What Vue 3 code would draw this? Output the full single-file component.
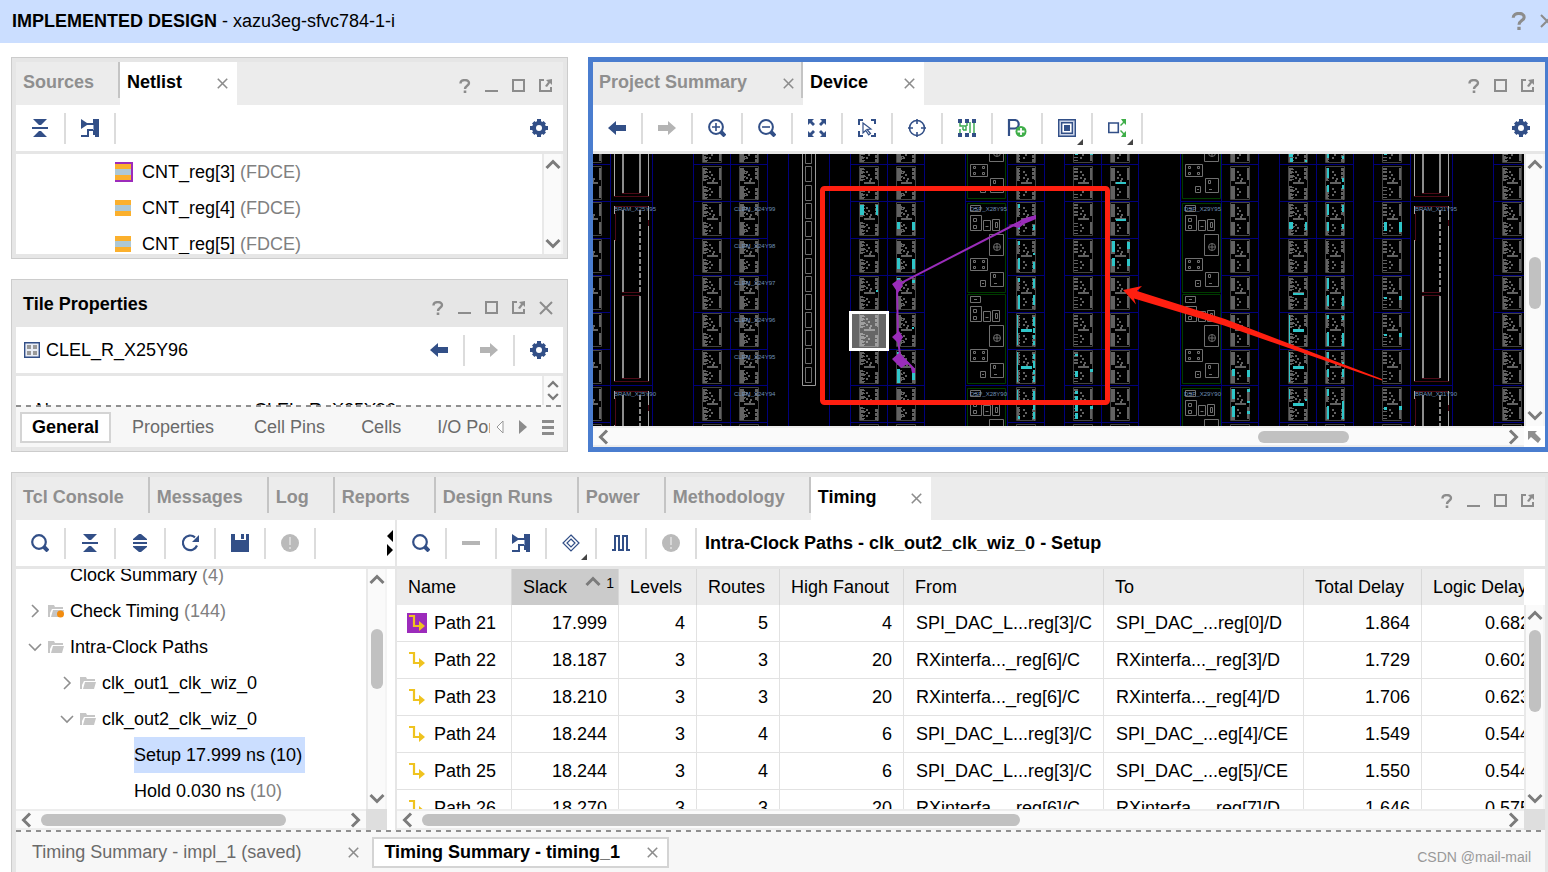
<script setup>
import { ref } from 'vue'

const netCells = [
  { name: 'CNT_reg[3]', kind: '(FDCE)', marked: true },
  { name: 'CNT_reg[4]', kind: '(FDCE)', marked: false },
  { name: 'CNT_reg[5]', kind: '(FDCE)', marked: false }
]

const deviceTools = [
  { icon: 'back', label: 'Previous view' },
  { icon: 'forward', label: 'Next view', off: true },
  { icon: 'zoom-in', label: 'Zoom in' },
  { icon: 'zoom-out', label: 'Zoom out' },
  { icon: 'fit', label: 'Zoom fit' },
  { icon: 'select-area', label: 'Select area' },
  { icon: 'target', label: 'Autofit selection' },
  { icon: 'routing', label: 'Routing resources' },
  { icon: 'pblock', label: 'Draw Pblock' },
  { icon: 'nested', label: 'Expand cells', more: true },
  { icon: 'connect', label: 'Show connections', more: true }
]
const treeTools = [
  { icon: 'search', label: 'Search' },
  { icon: 'collapse', label: 'Collapse all' },
  { icon: 'expand', label: 'Expand all' },
  { icon: 'refresh', label: 'Rerun' },
  { icon: 'save', label: 'Save' },
  { icon: 'warn', label: 'Messages', off: true }
]
const pathTools = [
  { icon: 'search', label: 'Search paths' },
  { icon: 'minus', label: 'Remove', off: true },
  { icon: 'netlist', label: 'Schematic' },
  { icon: 'diamond', label: 'Mark paths', more: true },
  { icon: 'pulse', label: 'Waveform' },
  { icon: 'warn', label: 'Path messages', off: true }
]

const propTabs = ['Properties', 'Cell Pins', 'Cells', 'I/O Ports']
const logTabs = ['Tcl Console', 'Messages', 'Log', 'Reports', 'Design Runs', 'Power', 'Methodology']

const tree = [
  { text: 'Clock Summary', count: '(4)', level: 0, leaf: true },
  { text: 'Check Timing', count: '(144)', level: 0, arrow: 'tree-right', folder: 'folder-dot' },
  { text: 'Intra-Clock Paths', level: 0, arrow: 'tree-down', folder: 'folder' },
  { text: 'clk_out1_clk_wiz_0', level: 1, arrow: 'tree-right', folder: 'folder' },
  { text: 'clk_out2_clk_wiz_0', level: 1, arrow: 'tree-down', folder: 'folder' },
  { text: 'Setup 17.999 ns', count: '(10)', level: 2, leaf: true, picked: true },
  { text: 'Hold 0.030 ns', count: '(10)', level: 2, leaf: true }
]

const columns = ['Name', 'Slack', 'Levels', 'Routes', 'High Fanout', 'From', 'To', 'Total Delay', 'Logic Delay']
const rows = ref([
  ['Path 21', '17.999', '4', '5', '4', 'SPI_DAC_L...reg[3]/C', 'SPI_DAC_...reg[0]/D', '1.864', '0.682'],
  ['Path 22', '18.187', '3', '3', '20', 'RXinterfa..._reg[6]/C', 'RXinterfa..._reg[3]/D', '1.729', '0.602'],
  ['Path 23', '18.210', '3', '3', '20', 'RXinterfa..._reg[6]/C', 'RXinterfa..._reg[4]/D', '1.706', '0.623'],
  ['Path 24', '18.244', '3', '4', '6', 'SPI_DAC_L...reg[3]/C', 'SPI_DAC_...eg[4]/CE', '1.549', '0.544'],
  ['Path 25', '18.244', '3', '4', '6', 'SPI_DAC_L...reg[3]/C', 'SPI_DAC_...eg[5]/CE', '1.550', '0.544'],
  ['Path 26', '18.270', '3', '3', '20', 'RXinterfa..._reg[6]/C', 'RXinterfa..._reg[7]/D', '1.646', '0.575']
])
const isNumber = i => i > 0 && i !== 5 && i !== 6

/* ---- device floorplan ---- */
const profiles = {
  jag: [4, 5, 2, 4, 5, 3, 1, 5, 6, 4, 1, 5, 3],
  half: [4, 4, 5, 6, 5, 7, 4, 4, 6, 5, 4, 4, 5],
  solid: [4, 4, 4, 4, 4, 4, 4, 4, 4, 4, 4, 4, 4],
  thin: [3, 2, 3, 3, 2, 3, 3, 2, 3, 3, 3, 2, 3],
  blocks: [4, 4, 0, 4, 4, 0, 0, 4, 4, 0, 4, 4, 0]
}
const specks = 'M7 5h2v2h-2zM9 8h2v2h-2zM7 11h2v2h-2zM11 12h2v2h-2zM7 22h2v2h-2zM9 25h2v2h-2zM7 28h2v2h-2z'
function cellPath(kind, dotted) {
  const p = profiles[kind]
  let d = ''
  for (let i = 0; i < p.length; i++) {
    if (!p[i]) continue
    d += `M1 ${2 + i}h${p[i]}v1h-${p[i]}z`
    d += `M1 ${20 + i}h${p[p.length - 1 - i]}v1h-${p[p.length - 1 - i]}z`
  }
  d += specks + 'M5 16h11v2h-11zM10 14h2v2h-2z'
  if (dotted) {
    for (let y = 2; y < 32; y += 4) if (y < 13 || y > 18) d += `M16 ${y}h3v3h-3zM18 ${y + 3}h1v1h-1z`
  } else d += 'M17 2h2v12h-2zM17 20h2v12h-2z'
  return d
}
const sliceColumns = [
  [582, 'half', false], [702, 'jag', false], [739, 'half', true], [859, 'jag', true], [896, 'half', true],
  [1016, 'thin', true], [1073, 'blocks', false], [1110, 'solid', false], [1230, 'solid', false],
  [1288, 'jag', true], [1325, 'thin', true], [1382, 'blocks', false], [1502, 'jag', false]
].map(([x, k, dot]) => ({ x, d: cellPath(k, dot) }))
const sliceRows = [129, 166, 202, 239, 276, 313, 350, 387, 424]
const rowLines = [164, 201, 238, 275, 312, 349, 385, 422]
const blueX = [610, 652, 693, 730, 767, 788, 829, 850, 887, 924, 965, 1007, 1044, 1064, 1101, 1138, 1180, 1221, 1258, 1279, 1316, 1353, 1373, 1410, 1452, 1493]
const blueSpans = [[593, 610], [693, 767], [850, 924], [1007, 1044], [1064, 1138], [1221, 1258], [1279, 1353], [1373, 1410], [1493, 1524]]
const blueLines = blueX.map(x => `M${x}.5 154v272`).join('') +
  rowLines.map(y => blueSpans.map(([a, b]) => `M${a} ${y}.5H${b}`).join('')).join('') +
  [201, 385].map(y => `M610 ${y}.5h42M965 ${y}.5h42M1180 ${y}.5h41M1410 ${y}.5h42`).join('')

const bramX = [614, 1414]
const bramY = [21, 206, 391]
const dspX = [967, 1182]
const dspY = [109, 203, 294, 388]
const shaftRects = [148, 166, 185, 203, 221, 239, 258, 276, 294, 312, 330, 348, 367]

const used = [
  [860, 205, 4, 10], [876, 205, 2, 10], [897, 222, 3, 7], [897, 258, 3, 11], [876, 290, 2, 2], [897, 278, 3, 2], [897, 352, 3, 2], [897, 369, 3, 14],
  [912, 222, 3, 8], [912, 259, 3, 10], [912, 280, 3, 3], [912, 327, 2, 2], [912, 373, 3, 7],
  [1018, 204, 2, 4], [1033, 225, 2, 5], [1018, 227, 2, 2], [1018, 241, 2, 4], [1018, 258, 2, 11], [1033, 253, 2, 2], [1033, 262, 2, 7],
  [1018, 278, 2, 4], [1018, 295, 2, 14], [1033, 279, 2, 9], [1033, 295, 2, 10],
  [1033, 317, 2, 9], [1033, 328, 2, 5], [1033, 335, 2, 4], [1033, 341, 2, 4], [1021, 329, 11, 3], [1021, 366, 11, 3],
  [1033, 354, 2, 5], [1033, 361, 2, 7], [1033, 370, 2, 4], [1033, 376, 2, 6], [1017, 315, 1, 30], [1017, 352, 1, 30],
  [1033, 391, 2, 11], [1033, 405, 2, 5], [1033, 412, 2, 7], [1017, 390, 1, 12], [1018, 416, 2, 3], [1021, 404, 11, 1],
  [1075, 154, 3, 1], [1090, 154, 3, 1], [1075, 354, 3, 2], [1075, 371, 3, 6], [1090, 369, 3, 3], [1075, 391, 3, 3], [1075, 396, 3, 4], [1075, 405, 3, 6], [1075, 413, 3, 6], [1090, 406, 3, 3],
  [1116, 182, 10, 2], [1116, 219, 10, 2], [1112, 241, 3, 11], [1127, 242, 3, 7], [1112, 258, 3, 8], [1127, 259, 3, 7],
  [1289, 154, 4, 3], [1290, 158, 3, 4], [1305, 160, 2, 2], [1289, 222, 4, 7], [1305, 222, 2, 8], [1293, 293, 11, 2], [1293, 329, 11, 3], [1293, 366, 11, 3], [1293, 403, 11, 3],
  [1289, 315, 1, 30], [1289, 352, 1, 30], [1289, 389, 1, 10], [1305, 399, 2, 2],
  [1327, 154, 2, 4], [1342, 156, 2, 3], [1327, 168, 2, 10], [1327, 185, 2, 7], [1342, 178, 2, 4], [1342, 185, 2, 4], [1327, 204, 2, 11], [1342, 205, 2, 7],
  [1327, 222, 2, 9], [1342, 224, 2, 5], [1327, 278, 2, 11], [1327, 295, 2, 11], [1342, 296, 2, 10], [1327, 315, 2, 4], [1342, 316, 2, 4], [1327, 332, 2, 14],
  [1342, 333, 2, 13], [1327, 352, 2, 9], [1327, 369, 2, 8], [1342, 362, 2, 2], [1342, 369, 2, 8], [1327, 389, 2, 7], [1327, 406, 2, 13], [1342, 401, 2, 18],
  [1384, 154, 3, 1], [1384, 222, 3, 9], [1399, 222, 3, 10], [1384, 297, 3, 2], [1399, 296, 3, 4], [1384, 334, 3, 2], [1399, 333, 3, 4], [1384, 407, 3, 3], [1399, 406, 3, 4],
  [1232, 369, 3, 7], [1247, 370, 3, 7], [1232, 389, 3, 10], [1247, 389, 3, 3], [1232, 406, 3, 11], [1247, 401, 3, 2], [1247, 411, 3, 3]
].map(([x, y, w, h]) => `M${x} ${y}h${w}v${h}h-${w}z`).join('')

const siteLabels = [
  ...[99, 98, 97, 96, 95, 94].map((n, i) => ({ x: 734, y: 211 + i * 37, t: 'CLEM_X24Y' + n })),
  { x: 614, y: 211, t: 'BRAM_X25Y95' }, { x: 614, y: 396, t: 'BRAM_X25Y90' },
  { x: 970, y: 211, t: 'DSP_X28Y95' }, { x: 970, y: 396, t: 'DSP_X28Y90' },
  { x: 1184, y: 211, t: 'DSP_X29Y95' }, { x: 1184, y: 396, t: 'DSP_X29Y90' },
  { x: 1415, y: 211, t: 'BRAM_X31Y95' }, { x: 1415, y: 396, t: 'BRAM_X31Y90' }
]
</script>

<template>
  <svg class="sprite" width="0" height="0" aria-hidden="true">
    <symbol id="collapse" viewBox="0 0 18 18"><path fill="#324f87" d="M2 0h14l-6 6H8zM1 8h16v2H1zM8 12h2l6 6H2z" /></symbol>
    <symbol id="expand" viewBox="0 0 18 18"><path fill="#324f87" d="M8 0h2l6 5v1H2V5zM2 8h14v2H2zM2 12h14v1l-6 5H8l-6-5z" /></symbol>
    <symbol id="netlist" viewBox="0 0 18 18"><path fill="#324f87" d="M0 0l6 4h6V0h6v18h-4v-2h-2v-4H8v6H0v-2h6v-6h6V6H6L0 10z" /><path stroke="#8ba0c6" d="M12.500 6v5" /></symbol>
    <symbol id="gear" viewBox="0 0 18 18">
      <g fill="#324f87"><path d="M7 0h4v18H7zM0 7h18v4H0z" /><path d="M7 0h4v18H7zM0 7h18v4H0z" transform="rotate(45 9 9) translate(.9 .9) scale(.9)" /><circle cx="9" cy="9" r="7" /></g><circle cx="9" cy="9" r="3" fill="#fff" />
    </symbol>
    <symbol id="search" viewBox="0 0 18 18"><circle cx="8" cy="8" r="6.800" fill="none" stroke="#324f87" stroke-width="2.200" /><path stroke="#324f87" stroke-width="4" d="M13 13l4 4" /></symbol>
    <symbol id="zoom-in" viewBox="0 0 18 18"><circle cx="8" cy="8" r="6.900" fill="none" stroke="#324f87" stroke-width="2" /><path stroke="#324f87" stroke-width="4" d="M13 13l4 4" /><path stroke="#324f87" stroke-width="1.600" d="M4 8h8M8 4v8" /></symbol>
    <symbol id="zoom-out" viewBox="0 0 18 18"><circle cx="8" cy="8" r="6.900" fill="none" stroke="#324f87" stroke-width="2" /><path stroke="#324f87" stroke-width="4" d="M13 13l4 4" /><path stroke="#324f87" stroke-width="1.600" d="M4 8h8" /></symbol>
    <symbol id="back" viewBox="0 0 18 18"><path fill="#324f87" d="M0 9l8-7v4h10v6H8v4z" /></symbol>
    <symbol id="forward" viewBox="0 0 18 18"><path fill="#b4b4b4" d="M18 9l-8-7v4H0v6h10v4z" /></symbol>
    <symbol id="fit" viewBox="0 0 18 18"><path fill="#324f87" d="M0 0h6L4 2l3 3-2 2-3-3-2 2zM18 0h-6l2 2-3 3 2 2 3-3 2 2zM0 18h6l-2-2 3-3-2-2-3 3-2-2zM18 18h-6l2-2-3-3 2-2 3 3 2-2z" /></symbol>
    <symbol id="select-area" viewBox="0 0 18 18"><path fill="none" stroke="#324f87" stroke-width="2" d="M1 6V1h4M13 1h4v4M1 12v5h4M13 17h4v-3" /><path fill="#fff" stroke="#324f87" stroke-width="1.200" d="M5 4l8 6-4 .5 3.500 4-1.800 1.400-3-4.400L5 14z" /></symbol>
    <symbol id="target" viewBox="0 0 18 18"><circle cx="9" cy="9" r="7.500" fill="none" stroke="#324f87" stroke-width="1.600" /><path stroke="#324f87" stroke-width="1.600" d="M9 0v5M9 13v5M0 9h5M13 9h5" /></symbol>
    <symbol id="routing" viewBox="0 0 18 18"><path fill="none" stroke="#35a84a" stroke-width="1.400" d="M2 3v4h6v4H5M2 14v-4M9 4v3M12 3v11M5 8v3M16 3v12" /><path fill="#324f87" d="M0 0h4v4H0zM7 0h4v4H7zM14 0h4v4h-4zM0 14h4v4H0zM7 14h4v4H7zM14 14h4v4h-4z" /></symbol>
    <symbol id="pblock" viewBox="0 0 20 18"><path fill="none" stroke="#324f87" stroke-width="2.200" d="M2 17V1h5.500a4 4 0 010 8.500H2" /><circle cx="14" cy="12.500" r="5.500" fill="#3fae49" /><path stroke="#fff" stroke-width="1.800" d="M10.500 12.500h7M14 9v7" /></symbol>
    <symbol id="nested" viewBox="0 0 18 18"><path fill="#c9d2e6" d="M0 0h18v18H0z" /><path fill="none" stroke="#324f87" stroke-width="1.400" d="M.7.7h16.600v16.600H.7z" /><path fill="#fff" stroke="#324f87" stroke-width="1.400" d="M3.700 3.700h10.600v10.600H3.700z" /><path fill="#324f87" d="M6 6h6v6H6z" /></symbol>
    <symbol id="connect" viewBox="0 0 20 18"><path fill="#fff" stroke="#324f87" stroke-width="1.600" d="M1.800 4h9.500v9.500H1.800z" /><path fill="#3fae49" d="M19 0v6l-2-2-3 3-1-1 3-3-2-3zM19 18v-6l-2 2-3-3-1 1 3 3-2 3z" /></symbol>
    <symbol id="refresh" viewBox="0 0 18 18"><path fill="none" stroke="#324f87" stroke-width="2.200" d="M16 11.500a7.300 7.300 0 11-2-8.200" /><path fill="#324f87" d="M18 1v7h-7z" /></symbol>
    <symbol id="save" viewBox="0 0 18 18"><path fill="#324f87" d="M0 0h3v6h12V0h3v18H0z" /><path fill="#324f87" d="M10 0h3v5h-3zM3 0h1v6H3z" /></symbol>
    <symbol id="warn" viewBox="0 0 18 18"><circle cx="9" cy="9" r="9" fill="#bababa" /><path fill="#d8d8d8" d="M8 3h2v8H8zM8 13h2v2H8z" /></symbol>
    <symbol id="minus" viewBox="0 0 18 18"><path fill="#b5b5b5" d="M0 7h18v4H0z" /></symbol>
    <symbol id="diamond" viewBox="0 0 18 18"><path fill="none" stroke="#324f87" stroke-width="1.200" d="M9 1l8 8-8 8-8-8zM9 5l4 4-4 4-4-4z" /></symbol>
    <symbol id="pulse" viewBox="0 0 18 18"><path fill="none" stroke="#324f87" stroke-width="2" d="M0 16h3V2h4v14h4V2h4v14h3" /></symbol>
    <symbol id="help" viewBox="0 0 14 14"><path fill="none" stroke="#8c8c8c" stroke-width="2.400" d="M2.500 4.500C2.500 0 11 0 11 4c0 2.800-4 2.600-4 6" /><path fill="#8c8c8c" d="M5.700 11.500h2.600V14H5.700z" /></symbol>
    <symbol id="min" viewBox="0 0 14 14"><path fill="#8c8c8c" d="M0 11h13v2H0z" /></symbol>
    <symbol id="max" viewBox="0 0 14 14"><path fill="none" stroke="#8c8c8c" stroke-width="2" d="M1 1h11v11H1z" /></symbol>
    <symbol id="ext" viewBox="0 0 14 14"><path fill="none" stroke="#8c8c8c" stroke-width="2" d="M5 1H1v11h11V8" /><path fill="#8c8c8c" d="M13 0v6l-2-2-3 4-2-1 3-4-2-2z" /></symbol>
    <symbol id="cross" viewBox="0 0 14 14"><path stroke="#8c8c8c" stroke-width="2" d="M1 1l12 12M13 1L1 13" /></symbol>
    <symbol id="c-up" viewBox="0 0 16 16"><path fill="none" stroke="#7b7b7b" stroke-width="3" d="M1.500 12L8 5.500l6.500 6.500" /></symbol>
    <symbol id="c-down" viewBox="0 0 16 16"><path fill="none" stroke="#7b7b7b" stroke-width="3" d="M1.500 4L8 10.500 14.500 4" /></symbol>
    <symbol id="c-left" viewBox="0 0 16 16"><path fill="none" stroke="#7b7b7b" stroke-width="3" d="M12 1.500L5.500 8l6.500 6.500" /></symbol>
    <symbol id="c-right" viewBox="0 0 16 16"><path fill="none" stroke="#7b7b7b" stroke-width="3" d="M4 1.500L10.500 8 4 14.500" /></symbol>
    <symbol id="tree-right" viewBox="0 0 14 14"><path fill="none" stroke="#8f8f8f" stroke-width="1.600" d="M4 1l6 6-6 6" /></symbol>
    <symbol id="tree-down" viewBox="0 0 14 14"><path fill="none" stroke="#8f8f8f" stroke-width="1.600" d="M1 4l6 6 6-6" /></symbol>
    <symbol id="folder" viewBox="0 0 17 14"><path fill="#c6c6c6" d="M0 1h6l1 2h8v2H4L2 9v4H0zM5 6h11l-2 7H3z" /></symbol>
    <symbol id="folder-dot" viewBox="0 0 17 14"><path fill="#c6c6c6" d="M0 1h6l1 2h8v2H4L2 9v4H0zM5 6h11l-2 7H3z" /><circle cx="12.500" cy="10" r="3.500" fill="#f28c0f" /></symbol>
    <symbol id="path" viewBox="0 0 20 20"><path fill="none" stroke="#efc31f" stroke-width="2.200" d="M2 3h5v10h6" /><path fill="#efc31f" d="M12 8l6 5-6 5z" /></symbol>
  </svg>

  <div class="page">
    <header class="title">
      <h1><b>IMPLEMENTED DESIGN</b> - xazu3eg-sfvc784-1-i</h1>
      <button class="t-help" aria-label="Help"><svg width="18" height="18"><use href="#help" /></svg></button>
      <button class="t-close" aria-label="Close"><svg width="14" height="14"><use href="#cross" /></svg></button>
    </header>

    <div class="top">
      <div class="left">
        <section class="panel">
          <div class="bar">
            <button class="tab sep">Sources</button>
            <button class="tab on">Netlist<svg class="x" width="11" height="11"><use href="#cross" /></svg></button>
            <div class="ctl">
              <button v-for="i in ['help', 'min', 'max', 'ext']" :key="i" :aria-label="i"><svg width="14" height="14"><use :href="'#' + i" /></svg></button>
            </div>
          </div>
          <div class="tools">
            <button class="tool" aria-label="Collapse all"><svg width="18" height="18"><use href="#collapse" /></svg></button>
            <button class="tool" aria-label="Schematic"><svg width="18" height="18"><use href="#netlist" /></svg></button>
            <button class="tool end" aria-label="Settings"><svg width="18" height="18"><use href="#gear" /></svg></button>
          </div>
          <div class="net">
            <ul>
              <li v-for="c in netCells" :key="c.name">
                <span class="chip" :class="{ marked: c.marked }"></span>{{ c.name }}&nbsp;<i>{{ c.kind }}</i>
              </li>
            </ul>
            <div class="vbar">
              <button aria-label="Scroll up"><svg width="16" height="16"><use href="#c-up" /></svg></button>
              <button aria-label="Scroll down"><svg width="16" height="16"><use href="#c-down" /></svg></button>
            </div>
          </div>
        </section>

        <section class="panel">
          <div class="bar plain">
            <h2>Tile Properties</h2>
            <div class="ctl">
              <button v-for="i in ['help', 'min', 'max', 'ext', 'cross']" :key="i" :aria-label="i"><svg width="14" height="14"><use :href="'#' + i" /></svg></button>
            </div>
          </div>
          <div class="tools">
            <p class="tile">
              <svg width="16" height="16" viewBox="0 0 16 16"><path fill="#e9edf5" stroke="#324f87" stroke-width="1.400" d="M.7.7h14.600v14.600H.7z" /><path fill="#999" d="M3 3h4v4H3zM9 3h4v4H9zM3 9h4v4H3zM9 9h4v4H9z" /></svg>
              CLEL_R_X25Y96
            </p>
            <button class="tool" aria-label="Previous object"><svg width="18" height="18"><use href="#back" /></svg></button>
            <button class="tool" aria-label="Next object" disabled><svg width="18" height="18"><use href="#forward" /></svg></button>
            <button class="tool last" aria-label="Settings"><svg width="18" height="18"><use href="#gear" /></svg></button>
          </div>
          <div class="props">
            <dl><dt>Name:</dt><dd>CLEL_R_X25Y96</dd></dl>
            <div class="vbar small">
              <button aria-label="Scroll up"><svg width="12" height="12"><use href="#c-up" /></svg></button>
              <button aria-label="Scroll down"><svg width="12" height="12"><use href="#c-down" /></svg></button>
            </div>
          </div>
          <div class="dash"></div>
          <div class="ptabs">
            <button class="box">General</button>
            <div class="clip"><button v-for="t in propTabs" :key="t">{{ t }}</button></div>
            <button class="nav" aria-label="Previous tabs"><svg width="8" height="14" viewBox="0 0 8 14"><path fill="#fff" stroke="#999" d="M7 1L1 7l6 6z" /></svg></button>
            <button class="nav" aria-label="Next tabs"><svg width="8" height="14" viewBox="0 0 8 14"><path fill="#8c8c8c" d="M0 0l8 7-8 7z" /></svg></button>
            <button class="nav" aria-label="Tab list"><svg width="12" height="15" viewBox="0 0 12 15"><path fill="#8c8c8c" d="M0 0h12v3H0zM0 6h12v3H0zM0 12h12v3H0z" /></svg></button>
          </div>
        </section>
      </div>

      <section class="device">
        <div class="bar">
          <button class="tab sep wide">Project Summary<svg class="x" width="11" height="11"><use href="#cross" /></svg></button>
          <button class="tab on">Device<svg class="x" width="11" height="11"><use href="#cross" /></svg></button>
          <div class="ctl">
            <button v-for="i in ['help', 'max', 'ext']" :key="i" :aria-label="i"><svg width="14" height="14"><use :href="'#' + i" /></svg></button>
          </div>
        </div>
        <div class="tools">
          <button v-for="t in deviceTools" :key="t.icon" class="tool" :class="{ more: t.more }" :aria-label="t.label" :disabled="t.off"><svg :width="t.icon === 'pblock' || t.icon === 'connect' ? 20 : 18" height="18"><use :href="'#' + t.icon" /></svg></button>
          <button class="tool end" aria-label="Settings"><svg width="18" height="18"><use href="#gear" /></svg></button>
        </div>
        <div class="canvas">
          <svg class="plan" viewBox="593 154 931 272" preserveAspectRatio="xMinYMin slice" role="img" aria-label="Device floorplan">
            <path d="M593 154h931v272H593z" />
            <path :d="blueLines" stroke="#00007a" fill="none" />
            <g v-for="c in sliceColumns" :key="c.x">
              <g v-for="y in sliceRows" :key="y" :transform="`translate(${c.x} ${y})`">
                <path d="M.5.5h19v33H.5z" fill="none" stroke="#434343" />
                <path :d="c.d" fill="#626262" />
              </g>
            </g>
            <g v-for="x in bramX" :key="'b' + x">
              <g v-for="y in bramY" :key="y" :transform="`translate(${x} ${y})`" fill="none">
                <path stroke="#4d0a17" d="M0 .5h35M1.500 7v28M34.500 14v6M8 86.500h18M8 89.500h18M8 172.500h18M0 175.500h35" />
                <path stroke="#a8a8a8" d="M.5 0v8M.5 34v141M34.500 0v14M34.500 20v155" />
                <path stroke="#8c8c8c" stroke-width="2" d="M9 4v82M9 90v82M26 90v82" />
                <path stroke="#8c8c8c" stroke-width="2" stroke-dasharray="5 2" d="M26 4v82" />
              </g>
            </g>
            <g fill="none" stroke="#6c6c6c">
              <path stroke="#9a9a9a" d="M802.500 154v231.500h13V154" />
              <path v-for="y in shaftRects" :key="y" :d="`M805.500 ${y}.500h6v15h-6z`" />
            </g>
            <g v-for="x in dspX" :key="'d' + x">
              <g v-for="y in dspY" :key="y" :transform="`translate(${x} ${y})`" fill="none">
                <path stroke="#003c00" d="M.5.5h38v89H.5z" />
                <path stroke="#707070" d="M3.500 2.500h10v6h-10zM3.500 12.500h11v15h-11zM6.500 15.500h3v3h-3zM6.500 22.500h3v3h-3zM16.500 17.500h7v10h-7zM25.500 16.500h7v11h-7zM28.500 19.500h2v5h-2zM22.500 31.500h14v21h-14zM3.500 55.500h17v12h-17zM6.500 57.500h2v2h-2zM15.500 57.500h2v2h-2zM6.500 63.500h2v2h-2zM15.500 63.500h2v2h-2zM13.500 77.500h5v6h-5zM23.500 69.500h13v14h-13zM26.500 71.500h2v3h-2zM15 80.500h2M27 80.500h3M7 5.500h3" />
                <circle cx="30" cy="44" r="3.500" stroke="#707070" /><path stroke="#707070" d="M27 44h6M30 41v6M18.500 23.500h3" />
              </g>
            </g>
            <path :d="used" fill="#2fc6c9" />
            <g class="site"><text v-for="l in siteLabels" :key="l.x + '-' + l.y" :x="l.x" :y="l.y">{{ l.t }}</text></g>
            <path d="M850.500 312.500h37v37h-37z" fill="#fff" fill-opacity=".4" stroke="#fff" stroke-width="3" />
            <path fill="none" stroke="#9a2cba" stroke-width="2" d="M1035 217l-12 3-11 6-115 59 1 54 2 16 14 14" />
            <path fill="#9a2cba" d="M1036 215v4l-12 5-5 4-11-3 12-2 5-5zM892 284l7-5 4 6-5 8zM892 337l7-6 4 6-4 7zM892 359l7-6 10 10-8 5zM911 368h4v5h-3z" />
            <rect x="822.500" y="188.500" width="285" height="214" rx="2" fill="none" stroke="#ff1f10" stroke-width="5" />
            <path fill="#ff1f10" d="M1123 290l19-4-5 5 88 28 157 60v1.500l-158-55-90-27 2 6z" />
          </svg>
          <div class="vbar">
            <button aria-label="Scroll up"><svg width="16" height="16"><use href="#c-up" /></svg></button>
            <span class="thumb"></span>
            <button aria-label="Scroll down"><svg width="16" height="16"><use href="#c-down" /></svg></button>
          </div>
          <div class="hbar">
            <button aria-label="Scroll left"><svg width="16" height="16"><use href="#c-left" /></svg></button>
            <div class="track end"><span class="thumb"></span></div>
            <button aria-label="Scroll right"><svg width="16" height="16"><use href="#c-right" /></svg></button>
          </div>
          <button class="corner" aria-label="World view"><svg width="14" height="12" viewBox="0 0 14 12"><path fill="#8f8f8f" d="M0 0h9L7 2l6 6-3 4-7-6-3 3z" /></svg></button>
        </div>
      </section>
    </div>

    <section class="panel bottom">
      <div class="bar">
        <button v-for="t in logTabs" :key="t" class="tab sep">{{ t }}</button>
        <button class="tab on">Timing<svg class="x" width="11" height="11"><use href="#cross" /></svg></button>
        <div class="ctl">
          <button v-for="i in ['help', 'min', 'max', 'ext']" :key="i" :aria-label="i"><svg width="14" height="14"><use :href="'#' + i" /></svg></button>
        </div>
      </div>
      <div class="split">
        <div class="nav-pane">
          <div class="tools">
            <button v-for="t in treeTools" :key="t.icon" class="tool" :aria-label="t.label" :disabled="t.off"><svg width="18" height="18"><use :href="'#' + t.icon" /></svg></button>
            <button class="fold" aria-label="Fold pane"><svg width="6" height="26" viewBox="0 0 6 26"><path d="M6 0v12L0 6zM0 14l6 6-6 6z" /></svg></button>
          </div>
          <div class="tree">
            <ul>
              <li v-for="n in tree" :key="n.text" :class="['lv' + n.level, { leaf: n.leaf }]">
                <svg v-if="n.arrow" width="14" height="14"><use :href="'#' + n.arrow" /></svg>
                <svg v-if="n.folder" class="folder" width="17" height="14"><use :href="'#' + n.folder" /></svg>
                <span :class="{ picked: n.picked }">{{ n.text }} <i v-if="n.count">{{ n.count }}</i></span>
              </li>
            </ul>
            <div class="vbar">
              <button aria-label="Scroll up"><svg width="16" height="16"><use href="#c-up" /></svg></button>
              <span class="thumb"></span>
              <button aria-label="Scroll down"><svg width="16" height="16"><use href="#c-down" /></svg></button>
            </div>
            <div class="hbar">
              <button aria-label="Scroll left"><svg width="16" height="16"><use href="#c-left" /></svg></button>
              <div class="track"><span class="thumb"></span></div>
              <button aria-label="Scroll right"><svg width="16" height="16"><use href="#c-right" /></svg></button>
            </div>
            <div class="square"></div>
          </div>
        </div>
        <div class="main-pane">
          <div class="tools">
            <button v-for="t in pathTools" :key="t.icon" class="tool" :class="{ more: t.more }" :aria-label="t.label" :disabled="t.off"><svg width="18" height="18"><use :href="'#' + t.icon" /></svg></button>
            <h2>Intra-Clock Paths - clk_out2_clk_wiz_0 - Setup</h2>
          </div>
          <div class="grid">
            <div class="scroll">
              <table>
                <colgroup><col v-for="(c, i) in columns" :key="c" :class="'k' + i"></colgroup>
                <thead>
                  <tr>
                    <th v-for="(c, i) in columns" :key="c" scope="col" :class="{ sorted: i === 1 }">
                      <div v-if="i === 1" class="sort">{{ c }}<svg width="16" height="16"><use href="#c-up" /></svg><sup>1</sup></div>
                      <template v-else>{{ c }}</template>
                    </th>
                  </tr>
                </thead>
                <tbody>
                  <tr v-for="(r, n) in rows" :key="r[0]">
                    <td v-for="(v, i) in r" :key="i" :class="{ num: isNumber(i) }">
                      <div v-if="i === 0" class="name"><svg :class="{ hot: n === 0 }" width="20" height="20"><use href="#path" /></svg>{{ v }}</div>
                      <template v-else>{{ v }}</template>
                    </td>
                  </tr>
                </tbody>
              </table>
            </div>
            <div class="vbar">
              <button aria-label="Scroll up"><svg width="16" height="16"><use href="#c-up" /></svg></button>
              <span class="thumb"></span>
              <button aria-label="Scroll down"><svg width="16" height="16"><use href="#c-down" /></svg></button>
            </div>
            <div class="hbar">
              <button aria-label="Scroll left"><svg width="16" height="16"><use href="#c-left" /></svg></button>
              <div class="track"><span class="thumb"></span></div>
              <button aria-label="Scroll right"><svg width="16" height="16"><use href="#c-right" /></svg></button>
            </div>
            <div class="square"></div>
          </div>
        </div>
      </div>
      <div class="dash"></div>
      <div class="files">
        <button class="file">Timing Summary - impl_1 (saved)<svg width="11" height="11"><use href="#cross" /></svg></button>
        <button class="file on">Timing Summary - timing_1<svg width="11" height="11"><use href="#cross" /></svg></button>
        <span class="mark">CSDN @mail-mail</span>
      </div>
    </section>
  </div>
</template>

<style>
body { margin: 0; background: #fff; }
</style>

<style scoped>
.page {
  display: flex; flex-direction: column; height: 100vh; min-height: 720px; overflow: hidden;
  font: 18px/36px "Liberation Sans", Arial, sans-serif; color: #000;
}
.page *, .page { box-sizing: border-box; }
button { font: inherit; color: inherit; background: none; border: 0; padding: 0; margin: 0; cursor: pointer; }
svg { display: block; flex: none; }
.sprite { position: absolute; }
ul, dl, dd, p, h1, h2 { margin: 0; padding: 0; list-style: none; font-size: 18px; font-weight: normal; }
i { font-style: normal; color: #808080; }

.title { display: flex; align-items: center; flex: none; height: 43px; background: #cbdeff; padding: 0 0 2px 12px; overflow: hidden; }
.title h1 { flex: 1; }
.t-close { margin: 0 -6px 0 12px; }

.top { display: grid; grid-template-columns: 557fr 960fr; gap: 20px; margin: 14px 0 20px 11px; flex: none; height: 395px; }
.left { display: flex; flex-direction: column; justify-content: space-between; min-width: 0; }
.panel { border: 1px solid #ccc; background: #e6e6e6; padding: 4px; }
.device { border: 5px solid #4a7dcf; border-right-width: 3px; min-width: 0; display: flex; flex-direction: column; }

.bar { display: flex; height: 43px; background: #ececec; flex: none; }
.bar.plain { background: #e6e6e6; padding-left: 7px; }
.bar h2 { font-weight: bold; height: 40px; line-height: 40px; }
.tab { position: relative; display: flex; align-items: center; height: 43px; padding: 0 26px 4px 7px; color: #8f8f8f; font-weight: bold; white-space: nowrap; }
.sep::after { content: ""; position: absolute; right: 0; top: 0; width: 2px; height: 36px; background: #c4c4c4; }
.tab.on { background: #fff; color: #000; padding-right: 9px; }
.tab.wide { padding: 0 9px 4px 6px; }
.tab .x { margin: 4px 0 0 35px; }
.device .tab .x { margin-left: 36px; }
.ctl { display: flex; margin-left: auto; padding: 4px 4px 0 0; }
.ctl button { display: flex; align-items: center; justify-content: center; width: 27px; }

.tools { display: flex; align-items: center; height: 49px; background: #fff; border-bottom: 3px solid #e6e6e6; flex: none; }
.tool { position: relative; display: flex; align-items: center; justify-content: center; flex: none; width: 50px; height: 31px; border-right: 2px solid #dcdcdc; }
.tool.end, .tool.last { width: 48px; border: 0; }
.tool.end { margin-left: auto; }
.more::after { content: ""; position: absolute; right: 8px; bottom: -1px; border: 3px solid; border-color: transparent #444 #444 transparent; }

.vbar { display: flex; flex-direction: column; justify-content: space-between; align-items: center; width: 21px; background: #fafafa; border: 2px solid #e9e9e9; border-width: 0 2px; border-right-color: #f4f4f4; padding: 2px 0; }
.hbar { display: flex; align-items: center; height: 21px; background: #fafafa; border: 2px solid #ededed; border-width: 2px 0; padding: 0 2px; }
.track { flex: 1; margin: 0 6px; }
.track.end { display: flex; justify-content: flex-end; }
.thumb { display: block; background: #c1c1c1; border-radius: 6px; width: 12px; height: 12px; }

.net { display: flex; height: 100px; background: #fff; overflow: hidden; }
.net ul { flex: 1; height: 100px; overflow: hidden; }
.net li { display: flex; align-items: center; height: 36px; padding-left: 99px; }
.net .vbar { height: 100px; }
.chip { width: 18px; height: 20px; margin-right: 9px; border: 2px solid transparent; border-left: 0; background: linear-gradient(#fbb02d 5px, #adc8d6 5px 11px, #fbb02d 11px) padding-box; }
.chip.marked { border-color: #9c2bbb; }

.tile { display: flex; align-items: center; gap: 6px; flex: 1; padding-left: 8px; }
.props { display: flex; height: 29px; background: #fff; overflow: hidden; }
.props dl { display: flex; flex: 1; height: 29px; overflow: hidden; padding: 16px 0 0 20px; }
.props dt { width: 218px; }
.vbar.small { height: 29px; padding: 2px 0; }
.dash { height: 2px; flex: none; background: #f7f7f7 repeating-linear-gradient(90deg, #8f8f8f 0 5px, transparent 5px 10px); }
.ptabs { display: flex; align-items: center; height: 40px; background: #f7f7f7; padding: 0 9px 0 4px; color: #6a6a6a; }
.box { height: 31px; line-height: 27px; padding: 0 10px; border: 2px solid #d4d4d4; background: #fff; color: #000; font-weight: bold; }
.clip { display: flex; flex: 1; gap: 36px; min-width: 0; padding-left: 21px; overflow: hidden; white-space: nowrap; }
.clip button:first-child { margin-right: 4px; }
.nav { margin-left: 6px; }
.nav + .nav { margin-left: 15px; }

.canvas { display: grid; grid-template: minmax(0, 1fr) 21px / minmax(0, 1fr) 21px; flex: 1; min-height: 0; }
.plan { width: 100%; height: 100%; background: #000; }
.site { font-size: 6px; fill: #6f90b8; }
.canvas .vbar .thumb { height: 52px; margin-top: 46px; margin-bottom: 60px; }
.canvas .hbar .thumb { width: 91px; margin-right: 151px; }
.corner { display: grid; place-items: center; }

.bottom { display: flex; flex-direction: column; flex: 1; min-height: 0; margin-left: 11px; border-right: 0; padding: 4px 3px 0 4px; border-bottom: 0; }
.bottom .sep { padding-right: 26px; }
.split { display: flex; flex: 1; min-height: 0; background: #fff; }
.nav-pane { display: flex; flex-direction: column; width: 381px; flex: none; border-right: 2px solid #e6e6e6; }
.fold { margin: 0 2px 0 auto; }
.tree { display: grid; grid-template: minmax(0, 1fr) 21px / minmax(0, 1fr) 21px; flex: 1; min-height: 0; margin-right: 8px; }
.tree ul { overflow: hidden; }
.tree li { display: flex; align-items: center; height: 36px; padding-left: 12px; white-space: nowrap; }
.tree li:first-child { margin-top: -12px; }
.tree .lv1 { padding-left: 44px; }
.tree .leaf { padding-left: 54px; }
.tree .lv2 { padding-left: 118px; }
.folder { margin: 0 5px 0 6px; }
.picked { background: #cbdeff; padding-right: 3px; }
.picked i { color: #000; }
.tree .vbar .thumb { height: 60px; margin-bottom: 60px; }
.tree .hbar .thumb { width: 245px; margin-left: 1px; }
.square { background: #dedede; }

.main-pane { display: flex; flex-direction: column; flex: 1; min-width: 0; }
.tools h2 { font-weight: bold; margin-left: 8px; white-space: nowrap; }
.grid { display: grid; grid-template: 36px minmax(0, 1fr) 21px / minmax(0, 1fr) 21px; flex: 1; min-height: 0; }
.scroll { grid-row: 1 / 3; grid-column: 1; overflow: hidden; }
.grid .vbar { grid-row: 2; grid-column: 2; }
.grid .vbar .thumb { height: 82px; margin-bottom: 72px; }
.grid .hbar { grid-row: 3; grid-column: 1; }
.grid .square { grid-row: 3; grid-column: 2; }
.grid .hbar .thumb { width: 598px; margin-left: 1px; }
table { table-layout: fixed; width: 1145px; border-collapse: separate; border-spacing: 0; }
.k0 { width: 115px; } .k1 { width: 107px; } .k2 { width: 78px; } .k3 { width: 83px; } .k4 { width: 124px; }
.k5, .k6 { width: 200px; } .k7 { width: 118px; } .k8 { width: 120px; }
th, td { border-right: 1px solid #e2e2e2; padding: 0 11px; text-align: left; font-weight: normal; white-space: nowrap; overflow: hidden; }
th { height: 36px; background: #ececec; border-color: #d8d8d8; }
td { height: 37px; border-bottom: 1px solid #e2e2e2; padding-left: 12px; }
th:nth-child(n+3) { padding: 0 0 0 11px; }
td:first-child { padding: 0 0 0 10px; }
.sorted { background: #cbcbcb; padding-right: 4px; }
.sort { display: flex; align-items: center; height: 36px; }
.sort svg { margin: -12px 5px 0 auto; }
.sort sup { font-size: 14px; line-height: 14px; margin-top: -8px; }
.name { display: flex; align-items: center; gap: 7px; }
.hot { background: #9c2bbb; }
.num { text-align: right; }

.files { display: flex; align-items: center; flex: none; height: 40px; background: #f7f7f7; padding-left: 4px; color: #6a6a6a; }
.file { display: flex; align-items: center; height: 31px; padding: 0 13px 0 12px; white-space: nowrap; }
.file svg { margin-left: 47px; }
.file.on { border: 2px solid #d4d4d4; background: #fff; color: #000; font-weight: bold; padding: 0 9px 0 10px; }
.file.on svg { margin-left: 27px; }
.mark { margin: 10px 14px 0 auto; font-size: 14px; line-height: 20px; color: #999; }
</style>
